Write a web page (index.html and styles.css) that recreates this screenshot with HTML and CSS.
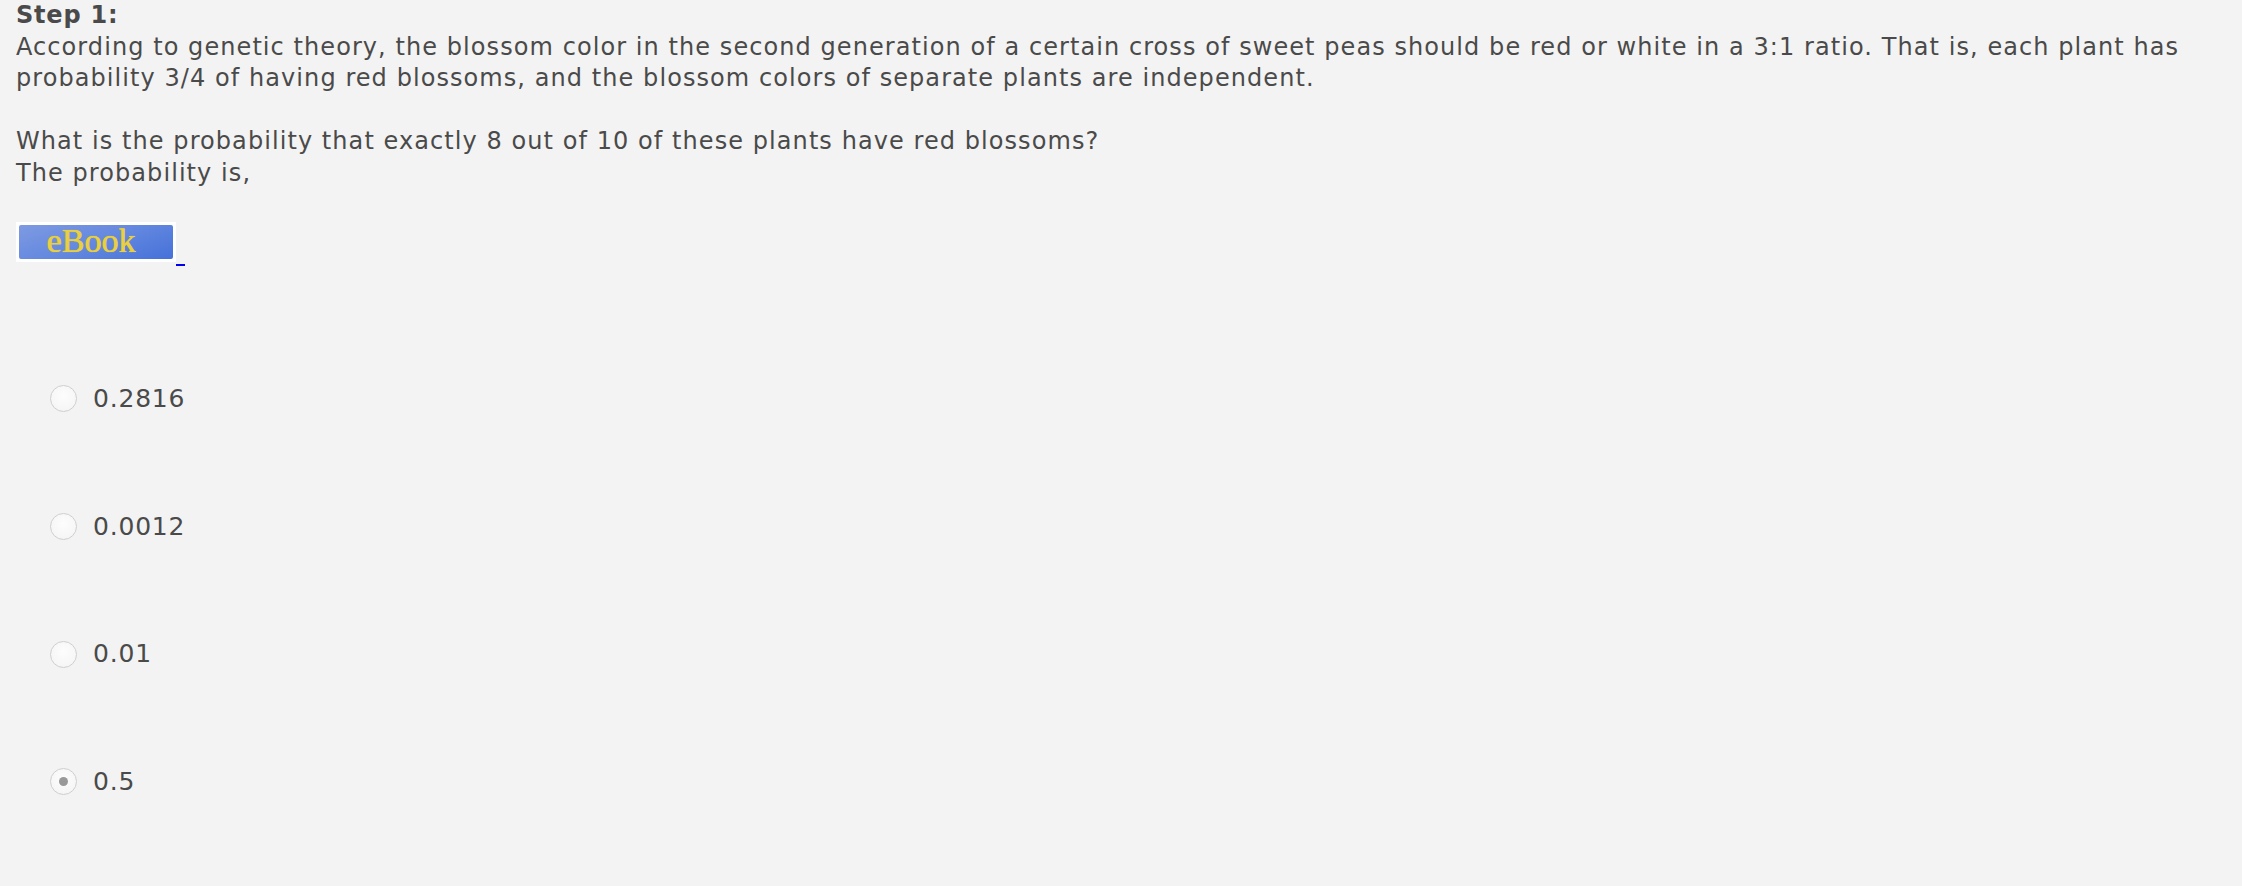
FILE: index.html
```html
<!DOCTYPE html>
<html>
<head>
<meta charset="utf-8">
<link rel="stylesheet" href="styles.css">
</head>
<body>
<div class="question">
  <div class="prompt">
    <b class="step">Step 1:</b><br>
    According to genetic theory, the blossom color in the second generation of a certain cross of sweet peas should be red or white in a 3:1 ratio. That is, each plant has probability 3/4 of having red blossoms, and the blossom colors of separate plants are independent.<br><br>
    What is the probability that exactly 8 out of 10 of these plants have red blossoms?<br>
    The probability is,
  </div>
  <div class="ebook-row">
    <a class="ebook-link" href="#"><span class="ebook"><span class="ebook-inner">eBook</span></span><span class="trail">&nbsp;</span></a>
  </div>
  <div class="options">
    <label class="option"><span class="radio"></span><span class="val">0.2816</span></label>
    <label class="option"><span class="radio"></span><span class="val">0.0012</span></label>
    <label class="option"><span class="radio"></span><span class="val">0.01</span></label>
    <label class="option"><span class="radio checked"></span><span class="val">0.5</span></label>
  </div>
</div>
</body>
</html>
```
FILE: styles.css
```css
html, body {
  margin: 0;
  padding: 0;
  background: #f3f3f3;
}
body {
  font-family: "DejaVu Sans", Verdana, sans-serif;
  color: #4a4a4a;
}
.question {
  padding: 0 16px;
}
.prompt {
  font-size: 24px;
  line-height: 31.5px;
  letter-spacing: 1.07px;
}
.step {
  font-weight: bold;
  letter-spacing: 0.8px;
}
.ebook-row {
  margin-top: 33px;
  height: 44px;
}
.ebook-link {
  display: inline-flex;
  align-items: flex-end;
  color: #0000ee;
  text-decoration: none;
}
.ebook {
  display: block;
  width: 160px;
  height: 40px;
  box-sizing: border-box;
  background: #fff;
  padding: 3px;
}
.ebook-inner {
  display: flex;
  align-items: center;
  justify-content: center;
  height: 100%;
  box-sizing: border-box;
  padding-right: 10px;
  padding-bottom: 2px;
  border-radius: 2px;
  background: linear-gradient(160deg, #7e9ae2 0%, #6388df 50%, #4571d9 100%);
  font-family: "Liberation Serif", "DejaVu Serif", serif;
  font-size: 34px;
  color: #e8d040;
  text-shadow: 0 0 1px #d8c038, 0.4px 0 0 #e8d040;
}
.trail {
  display: inline-block;
  width: 9px;
  height: 2px;
  margin-bottom: -4px;
  background: #0000ee;
  font-size: 2px;
  line-height: 2px;
  overflow: hidden;
}
.options {
  margin-top: 119px;
  padding-left: 34px;
  display: flex;
  flex-direction: column;
  gap: 100px;
}
.option {
  display: flex;
  align-items: center;
  height: 27.7px;
}
.radio {
  width: 27px;
  height: 27px;
  box-sizing: border-box;
  border-radius: 50%;
  border: 1px solid #cfcfcf;
  background: radial-gradient(circle at 50% 40%, #fdfdfd 0%, #f6f6f6 70%, #eeeeee 100%);
  margin-right: 16px;
  position: relative;
  flex: none;
}
.radio.checked::after {
  content: "";
  position: absolute;
  left: 50%;
  top: 50%;
  width: 9px;
  height: 9px;
  margin: -4.5px 0 0 -4.5px;
  border-radius: 50%;
  background: #999;
}
.val {
  font-size: 25px;
  line-height: 28px;
  letter-spacing: 0.8px;
  color: #4a4a4a;
}
```
